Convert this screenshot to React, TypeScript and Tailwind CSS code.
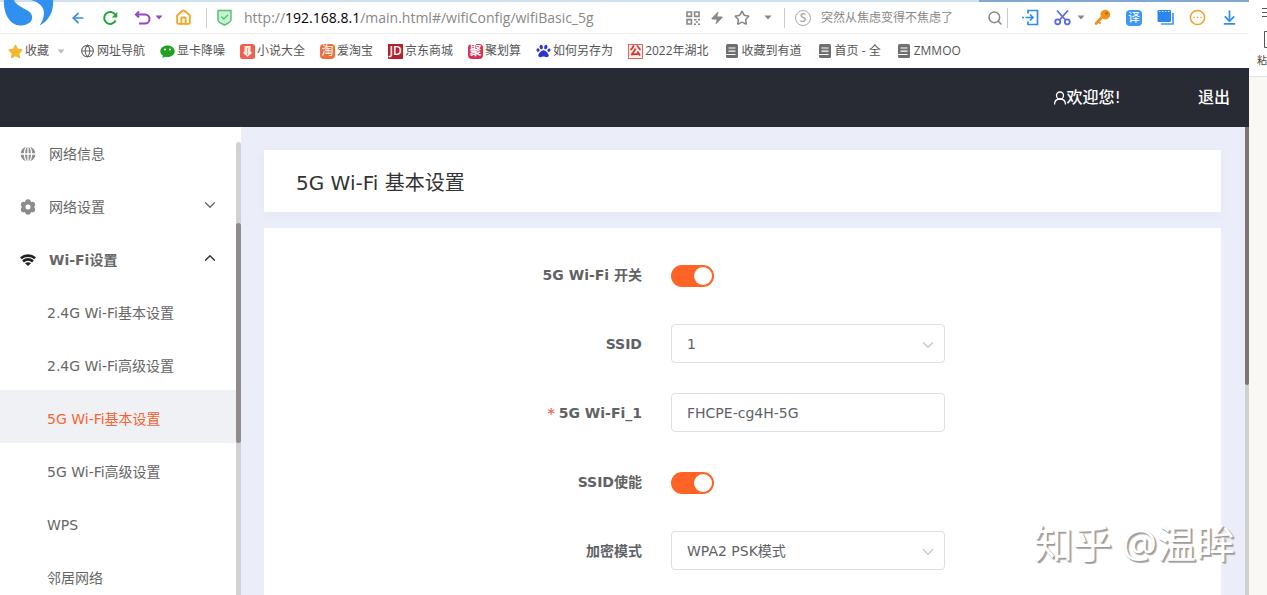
import React, { useState } from 'react'
import { ArrowDownToLine, ArrowLeft, ChevronDown, ChevronUp, CircleEllipsis, Globe, House, Search, Star, Zap } from 'lucide-react'
import { FaPaw, FaStar } from 'react-icons/fa'

const uiFont = "font-['Open_Sans','Noto_Sans_CJK_SC',sans-serif]"
const appFont = "font-['DejaVu_Sans','Noto_Sans_CJK_SC',sans-serif]"

const Caret = ({ className = '' }: { className?: string }) => (
    <svg viewBox="0 0 8 5" className={`h-[5px] w-2 shrink-0 ${className}`} fill="currentColor">
        <path d="M0.5 0.5h7L4 4.5z" />
    </svg>
)

const Logo = () => (
    <svg viewBox="0 0 54 27" className="absolute left-0 top-[-2px] h-[27px] w-[54px]" fill="#2f90f0">
        <path d="M4 0C3 13 10 26 21 25.500C29 25 33 21 32 16C31 9 17 8 14 0Z" />
        <path d="M31 0C39 2 44 7 44 13C44 18 42 22 39.500 25.500C49 21 54 11 53 0Z" />
    </svg>
)

const Refresh = () => (
    <svg viewBox="0 0 16 16" className="h-4 w-4" fill="none" stroke="#1fa83a" strokeWidth="2">
        <path d="M13.6 10.5A6 6 0 1 1 13.4 5" />
        <path d="M15.3 2v5.6H9.7z" fill="#1fa83a" stroke="none" />
    </svg>
)

const Undo = () => (
    <svg viewBox="0 0 17 14" className="h-3.5 w-[17px]" fill="none" stroke="#9747c4" strokeWidth="2">
        <path d="M5 0.500L2 3.500L5 6.500M2 3.500h9a4.500 4.500 0 0 1 0 9H5" />
    </svg>
)

const Shield = () => (
    <svg viewBox="0 0 15 17" className="h-[17px] w-[15px]" fill="#c9f2d2" stroke="#55bd70" strokeWidth="1.4">
        <path d="M1 1.5h13v9.500c0 2-3 3.500-6.500 5C4 14.500 1 13 1 11z" />
        <path d="M4.300 7.500l2.500 2.500 4.300-4.300" fill="none" />
    </svg>
)

const QrCode = () => (
    <svg viewBox="0 0 14 14" className="h-3.5 w-3.5" fill="none" stroke="#888" strokeWidth="1.600">
        <path d="M1 1h4.400v4.400H1zM8.600 1H13v4.400H8.600zM1 8.600h4.400V13H1z" />
        <path d="M8 8.800h2.500M12 8.800h2M9.800 11h2.200M8 13.200h2M12 13.200h2" />
    </svg>
)

const SendTo = () => (
    <svg viewBox="0 0 17 17" className="h-[17px] w-[17px]" fill="none" stroke="#2d8cf0" strokeWidth="1.700">
        <path d="M6 4.500V1.500h9.500v14H6V12.500" />
        <path d="M0 8.500h2M3.500 8.500H11M8 5.500l3 3-3 3" />
    </svg>
)

const Scissors = () => (
    <svg viewBox="0 0 17 17" className="h-[17px] w-[17px]" fill="none" stroke="#5b6be8" strokeWidth="1.800">
        <path d="M3 1.500l8.500 9.500M14 1.500L5.500 11" />
        <circle cx="3.700" cy="12.800" r="2.500" />
        <circle cx="13.300" cy="12.800" r="2.500" />
    </svg>
)

const KeyIcon = () => (
    <svg viewBox="0 0 17 17" className="h-[17px] w-[17px]">
        <path d="M9 7L2 14.500" stroke="#f0921e" strokeWidth="2.800" strokeLinecap="round" />
        <path d="M4 12l2.500 2.500" stroke="#f0921e" strokeWidth="2" />
        <circle cx="11.300" cy="5.600" r="4.900" fill="#f0921e" />
        <circle cx="12.600" cy="4.300" r="1.400" fill="#c06a10" />
    </svg>
)

const Film = () => (
    <svg viewBox="0 0 17 17" className="h-[17px] w-[17px]">
        <path d="M4 15h12V4" fill="none" stroke="#3f97f5" strokeWidth="1.700" />
        <rect x="0.500" y="1" width="13.500" height="12" rx="1" fill="#2b87ee" />
        <path d="M2 2.500h11" stroke="#b9dbff" strokeWidth="1" strokeDasharray="1.500 1.500" />
    </svg>
)

const WeChat = () => (
    <svg viewBox="0 0 15 13" className="h-[13px] w-[15px]">
        <path d="M7.500 0.500c4 0 7.200 2.600 7.200 5.800s-3.200 5.800-7.200 5.800c-0.800 0-1.600-0.100-2.300-0.300L2.500 13l0.400-2.400C1.300 9.600 0.300 8 0.300 6.300c0-3.200 3.200-5.800 7.200-5.800z" fill="#1fa01f" />
        <circle cx="5" cy="4.500" r="1.100" fill="#fff" />
        <circle cx="10" cy="4.500" r="1.100" fill="#fff" />
    </svg>
)

const Novel = () => (
    <svg viewBox="0 0 15 15" className="h-[15px] w-[15px]">
        <rect width="15" height="15" rx="2.500" fill="#f0604f" />
        <path d="M4.500 2h6v5l1.500 2-4.500 4L3 9l1.500-2z" fill="#ffe9e2" />
        <path d="M7.500 4v7" stroke="#f7a494" strokeWidth="1" />
    </svg>
)

const DocIcon = () => (
    <svg viewBox="0 0 12 14" className="mx-0.5 h-3.5 w-3">
        <rect width="12" height="14" rx="1.500" fill="#6f6f6f" />
        <path d="M2.500 4h7M2.500 7.200h7M0 10.500h9.500" stroke="#fff" strokeWidth="1.200" />
    </svg>
)

const Badge = ({ text, className }: { text: string, className: string }) => (
    <span className={`flex h-[15px] w-[15px] items-center justify-center overflow-hidden text-xs leading-none ${className}`}>{text}</span>
)

const bookmarks = [
    { name: '网址导航', icon: <Globe className="h-3.5 w-[15px] text-[#666]" strokeWidth={1.8} /> },
    { name: '显卡降噪', icon: <WeChat /> },
    { name: '小说大全', icon: <Novel /> },
    { name: '爱淘宝', icon: <Badge text="淘" className="rounded-sm bg-[#ee7038] text-white" /> },
    { name: '京东商城', icon: <Badge text="JD" className="bg-[#b8202c] font-semibold text-white" /> },
    { name: '聚划算', icon: <Badge text="聚" className="rounded-sm bg-[#dc2f55] font-bold text-white" /> },
    { name: '如何另存为', icon: <FaPaw className="h-3.5 w-[15px] text-[#2a32d8]" /> },
    { name: '2022年湖北', icon: <Badge text="公" className="border border-[#e06a62] bg-[#fff0ee] font-bold text-[#cf342a]" /> },
    { name: '收藏到有道', icon: <DocIcon /> },
    { name: '首页 - 全', icon: <DocIcon /> },
    { name: 'ZMMOO', icon: <DocIcon /> },
]

const subMenus = ['2.4G Wi-Fi基本设置', '2.4G Wi-Fi高级设置', '5G Wi-Fi基本设置', '5G Wi-Fi高级设置', 'WPS', '邻居网络']

const Toolbar = () => (
    <div className="relative flex h-8 shrink-0 items-center border-b border-[#f0f0f0] pl-[70px] text-[#888]">
        <Logo />
        <button aria-label="back" className="mr-4"><ArrowLeft className="h-4 w-4 text-[#2d8cf0]" strokeWidth={2.6} /></button>
        <button aria-label="refresh" className="mr-4"><Refresh /></button>
        <button aria-label="undo" className="mr-3 flex items-center gap-1"><Undo /><Caret className="text-[#9747c4]" /></button>
        <button aria-label="home" className="mr-3.5"><House className="h-[17px] w-[17px] text-[#f5a623]" strokeWidth={2.6} /></button>
        <span className="mr-2.5 h-5 w-px bg-[#ccc]" />
        <Shield />
        <div className="ml-3 min-w-0 flex-1 truncate text-sm">
            http://<span className="text-black">192.168.8.1</span>/main.html#/wifiConfig/wifiBasic_5g
        </div>
        <button aria-label="qr code" className="mr-2.5"><QrCode /></button>
        <button aria-label="speed" className="mr-2.5"><Zap className="h-3.5 w-3.5" fill="currentColor" strokeWidth={1} /></button>
        <button aria-label="favorite" className="mr-3.5"><Star className="h-4 w-4" strokeWidth={2.4} /></button>
        <button aria-label="more addresses" className="mr-3"><Caret /></button>
        <span className="mr-2.5 h-5 w-px bg-[#ccc]" />
        <div className="flex w-[213px] items-center">
            <span className="mr-2.5 flex h-4 w-4 items-center justify-center rounded-full border border-[#aaa] text-xs font-semibold leading-none text-[#aaa]">S</span>
            <span className="flex-1 whitespace-nowrap text-xs">突然从焦虑变得不焦虑了</span>
            <button aria-label="search" className="mr-1"><Search className="h-4 w-4" strokeWidth={2.2} /></button>
            <span className="h-5 w-px bg-[#ccc]" />
        </div>
        <div className="flex items-center gap-[15px] pl-3.5 pr-[11px]">
            <button aria-label="send"><SendTo /></button>
            <button aria-label="screenshot" className="flex items-center gap-1.5"><Scissors /><Caret className="mr-[-6px]" /></button>
            <button aria-label="password"><KeyIcon /></button>
            <button aria-label="translate" className="flex h-4 w-4 items-center justify-center rounded-sm bg-[#3f97f5] text-xs leading-none text-white">译</button>
            <button aria-label="video"><Film /></button>
            <button aria-label="more"><CircleEllipsis className="h-[17px] w-[17px] text-[#efa52c]" strokeWidth={2.2} /></button>
            <button aria-label="download"><ArrowDownToLine className="h-[17px] w-[17px] text-[#2d8cf0]" strokeWidth={2.4} /></button>
        </div>
    </div>
)

const Bookmarks = () => (
    <div className="flex h-[34px] shrink-0 items-center gap-[15px] whitespace-nowrap pl-2 text-xs text-[#555]">
        <button className="flex items-center gap-0.5">
            <FaStar className="h-[15px] w-[15px] text-[#f7b733]" />
            收藏
            <Caret className="ml-1.5 text-[#bbb]" />
        </button>
        {bookmarks.map((item) => (
            <a key={item.name} href="#" className="flex items-center gap-0.5">
                {item.icon}
                <span>{item.name}</span>
            </a>
        ))}
    </div>
)

const Sidebar = ({ active, setActive }: { active: string, setActive: (name: string) => void }) => (
    <aside className="flex w-[241px] shrink-0 bg-white text-sm text-[#666]">
        <nav className="min-w-0 flex-1 overflow-hidden">
            {/* the list is scrolled a little, so the first item is partly out of view */}
            <div className="-mt-0.5">
                <a href="#" className="flex h-[53px] items-center pl-5 pt-1">
                    <svg viewBox="0 0 16 16" className="mr-[13px] h-4 w-4" fill="#909090">
                        <circle cx="8" cy="8" r="7.500" />
                        <path d="M8 0v16M0 8h16" stroke="#fff" strokeWidth="1.300" />
                        <ellipse cx="8" cy="8" rx="3.600" ry="7.800" fill="none" stroke="#fff" strokeWidth="1.200" />
                    </svg>
                    网络信息
                </a>
                <a href="#" className="flex h-[53px] items-center pl-5 pt-1">
                    <svg viewBox="0 0 16 16" className="mr-[13px] h-4 w-4" fill="#8c8c8c">
                        <circle cx="8" cy="3.200" r="2.900" />
                        <circle cx="12.200" cy="5.600" r="2.900" />
                        <circle cx="12.200" cy="10.400" r="2.900" />
                        <circle cx="8" cy="12.800" r="2.900" />
                        <circle cx="3.800" cy="10.400" r="2.900" />
                        <circle cx="3.800" cy="5.600" r="2.900" />
                        <circle cx="8" cy="8" r="5" />
                        <circle cx="8" cy="8" r="2.500" fill="#fff" />
                    </svg>
                    网络设置
                    <ChevronDown className="mb-1 ml-auto mr-[17px] h-[18px] w-[18px]" strokeWidth={1.6} />
                </a>
                <a href="#" className="flex h-[53px] items-center pl-5 pt-1 font-bold">
                    <svg viewBox="0 0 16 12" className="mr-[13px] h-3 w-4" fill="none" stroke="#222" strokeWidth="2.800">
                        <path d="M0.800 4.300C5 0.700 11 0.700 15.200 4.300" />
                        <path d="M3 7.400C6 5 10 5 13 7.400" />
                        <path d="M5 9.200C6.800 7.800 9.200 7.800 11 9.200L8 12z" fill="#222" stroke="none" />
                    </svg>
                    Wi-Fi设置
                    <ChevronUp className="mb-1 ml-auto mr-[17px] h-[18px] w-[18px] text-[#333]" strokeWidth={1.8} />
                </a>
                {subMenus.map((name) => (
                    <a
                        key={name}
                        href="#"
                        onClick={() => setActive(name)}
                        className={`flex h-[53px] items-center pl-[47px] pt-1 ${active == name ? 'bg-[#f0f1f5] text-[#f96332]' : ''}`}
                    >
                        {name}
                    </a>
                ))}
            </div>
        </nav>
        <div className="mt-[15px] w-[5px] rounded-t bg-[#d2d2d2] pt-[81px]">
            <div className="h-[220px] rounded-sm bg-[#928b8b]" />
        </div>
    </aside>
)

const Row = ({ id, label, required, children }: { id: string, label: string, required?: boolean, children: React.ReactNode }) => (
    <div className="grid h-[39px] grid-cols-[378fr_274fr_247fr] items-center gap-x-[29px]">
        <label htmlFor={id} className="whitespace-nowrap text-right font-bold">
            {required && <span className="mr-1 text-[#f56c6c]">*</span>}
            {label}
        </label>
        {children}
    </div>
)

const Switch = ({ id }: { id: string }) => (
    <input
        id={id}
        type="checkbox"
        role="switch"
        defaultChecked
        className="mt-0.5 flex h-[22px] w-[43px] appearance-none items-center rounded-full bg-[#ccc] px-0.5 before:h-[18px] before:w-[18px] before:rounded-full before:bg-white checked:justify-end checked:bg-[#ff6426]"
    />
)

const Select = ({ id, options }: { id: string, options: string[] }) => (
    <div className="relative">
        <select id={id} className="h-[39px] w-full appearance-none rounded border border-[#dcdfe6] bg-white px-[15px] text-[#606266]">
            {options.map((item) => <option key={item}>{item}</option>)}
        </select>
        <ChevronDown className="pointer-events-none absolute right-2 top-3 h-[18px] w-[18px] text-[#c0c4cc]" strokeWidth={1.6} />
    </div>
)

const App = () => {
    const [active, setActive] = useState('5G Wi-Fi基本设置')

    return (
        <div className="relative flex h-screen overflow-hidden bg-white">
            <div className="flex min-w-0 flex-1 flex-col">
                <div className={`shrink-0 ${uiFont}`}>
                    <div className="flex h-0.5">
                        <div className="flex-1 bg-[#cfe0ee]" />
                        <div className="w-[270px] bg-[#82a9d2]" />
                    </div>
                    <Toolbar />
                    <Bookmarks />
                </div>
                <header className={`flex h-[59px] shrink-0 items-center justify-end bg-[#282b33] pr-[19px] text-base font-medium text-white ${appFont}`}>
                    <span className="mr-[77px] flex items-center">
                        <svg viewBox="0 0 14 16" className="h-4 w-3.5" fill="none" stroke="currentColor" strokeWidth="1.300">
                            <circle cx="7" cy="5.500" r="3.500" />
                            <path d="M1.500 14.500c0-3.500 2.300-5.500 5.500-5.500s5.500 2 5.500 5.500" />
                        </svg>
                        欢迎您!
                    </span>
                    <button>退出</button>
                </header>
                <div className={`flex min-h-0 flex-1 ${appFont}`}>
                    <Sidebar active={active} setActive={setActive} />
                    <main className="flex min-w-0 flex-1 flex-col gap-4 overflow-hidden bg-[#ebeef9] pl-[23px] pr-6 pt-[23px]">
                        <h1 className="flex h-[62px] shrink-0 items-center bg-white px-8 pt-1 text-xl text-[#333] shadow-[0_2px_12px_rgba(0,0,0,0.04)]">
                            5G Wi-Fi 基本设置
                        </h1>
                        <form className="flex flex-1 flex-col gap-[30px] bg-white pt-[27px] text-sm text-[#606266]">
                            <Row id="switch5g" label="5G Wi-Fi 开关"><Switch id="switch5g" /></Row>
                            <Row id="ssid" label="SSID"><Select id="ssid" options={['1', '2', '3', '4']} /></Row>
                            <Row id="name" label="5G Wi-Fi_1" required>
                                <input id="name" type="text" defaultValue="FHCPE-cg4H-5G" className="h-[39px] w-full rounded border border-[#dcdfe6] px-[15px]" />
                            </Row>
                            <Row id="enable" label="SSID使能"><Switch id="enable" /></Row>
                            <Row id="mode" label="加密模式"><Select id="mode" options={['WPA2 PSK模式', 'WPA PSK模式']} /></Row>
                        </form>
                    </main>
                    <div className="w-1 shrink-0 bg-[#d0d0d0]">
                        <div className="h-[258px] rounded-b-sm bg-[#7b7777]" />
                    </div>
                </div>
            </div>

            {/* window behind the browser */}
            <div className={`flex w-[18px] shrink-0 flex-col overflow-hidden bg-[#faf8f5] ${uiFont}`}>
                <div className="flex h-[77px] shrink-0 flex-col border-b border-[#e4e4e4] bg-white pl-2 text-[#555]">
                    <svg viewBox="0 0 10 52" className="h-[52px] w-2.5" fill="none" stroke="currentColor">
                        <path d="M5 8.500h5M5 12.500h5M5 16.500h5M10 31.500H7.500v16H10" />
                    </svg>
                    <span className="text-[10px] leading-4 text-[#5b4636]">粘</span>
                </div>
            </div>

            <div className={`pointer-events-none absolute bottom-[22px] right-8 whitespace-nowrap text-[39px] leading-[60px] text-white [text-shadow:1px_1px_1px_#999,2px_2px_1px_#aaa] ${uiFont}`}>
                知乎 @温眸
            </div>
        </div>
    )
}

export default App
